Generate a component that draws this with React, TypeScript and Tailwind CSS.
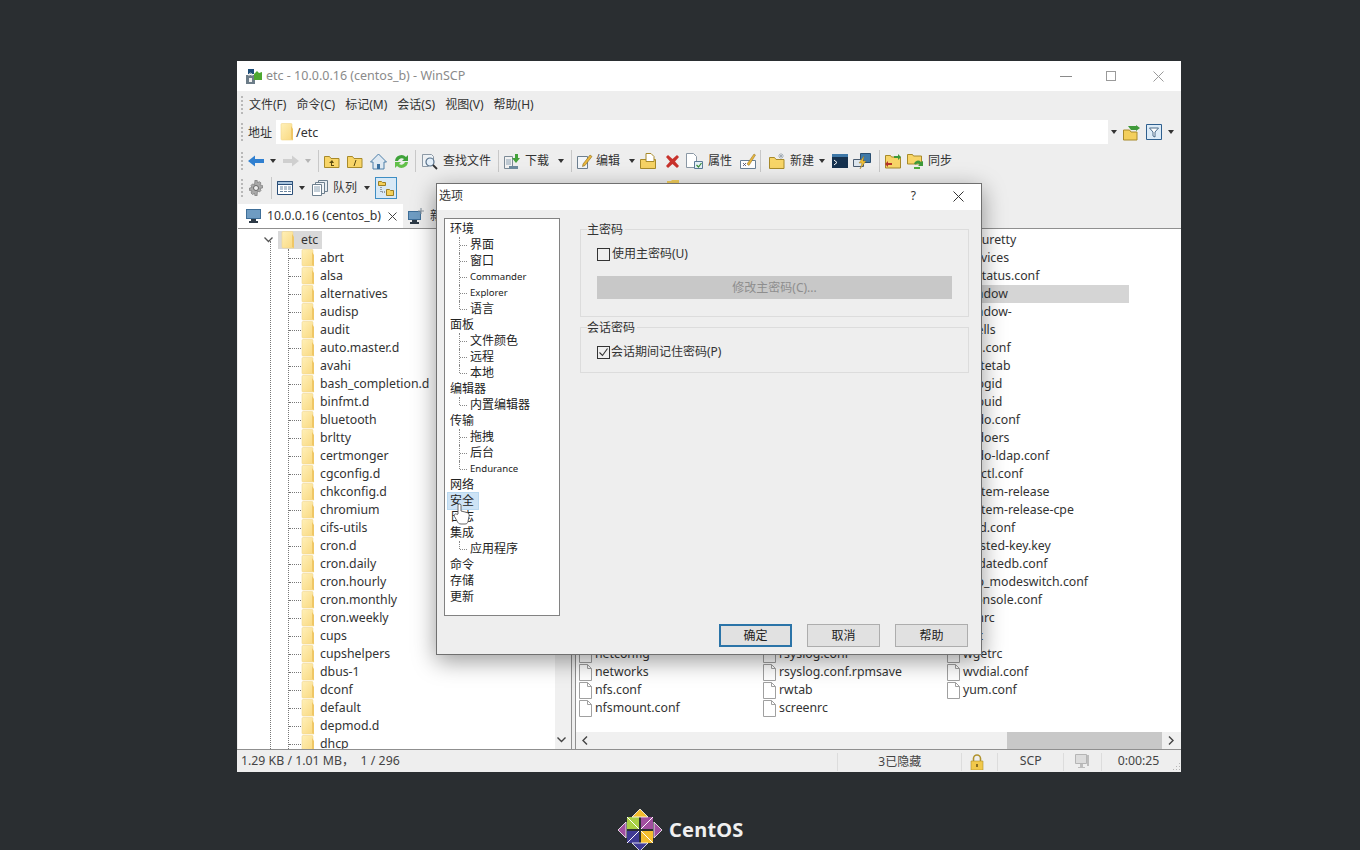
import React from "react";

const SANS = "font-['Noto_Sans','Noto_Sans_CJK_SC',sans-serif]";

const Folder = ({ c = "" }: { c?: string }) => (
  <svg viewBox="0 0 14 18" className={`w-[14px] h-[18px] shrink-0 ${c}`}>
    <defs>
      <linearGradient id="fg" x1="0" y1="0" x2="1" y2="1">
        <stop offset="0" stopColor="#fff0b8" />
        <stop offset="1" stopColor="#f9d87f" />
      </linearGradient>
    </defs>
    <path d="M1 1.5q0-1 1-1h9q1 0 1 1v14l1 1.5H2q-1 0-1-1z" fill="url(#fg)" stroke="#f1d78f" strokeWidth=".6" />
    <path d="M11 3v13l2 1V6z" fill="#efc766" />
  </svg>
);

const FileIcon = () => (
  <svg viewBox="0 0 13 17" className="w-[13px] h-[17px] shrink-0">
    <path d="M.5.5h8l4 4v12H.5z" fill="#fff" stroke="#a0a0a0" />
    <path d="M8.5.5v4h4" fill="none" stroke="#a0a0a0" />
  </svg>
);

const Caret = ({ c = "", muted = false }: { c?: string; muted?: boolean }) => (
  <svg viewBox="0 0 6 4" className={`w-[6px] h-[4px] shrink-0 ${c}`}>
    <path d="M0 0h6L3 4z" fill={muted ? "#b5b5b5" : "#333"} />
  </svg>
);

const Grip = () => <div className="w-[2px] h-[18px] shrink-0 border-l-2 border-dotted border-[#b8b8b8]" />;
const Sep = ({ c = "" }: { c?: string }) => <div className={`w-px h-[22px] shrink-0 bg-[#c8c8c8] ${c}`} />;

const Ico = ({ w = 16, h = 16, c = "", children }: { w?: number; h?: number; c?: string; children: React.ReactNode }) => (
  <svg viewBox={`0 0 ${w} ${h}`} width={w} height={h} className={`shrink-0 ${c}`}>
    {children}
  </svg>
);

const YFolder = () => <path d="M.5 3.5h5l1.5 2h8v9H.5z" fill="#f8d568" stroke="#a88a2a" />;

const titleRow = "h-[30px] bg-white flex items-center shrink-0";
const tool = "text-[12px] leading-none text-[#333]";

const treeItems = [
  "abrt", "alsa", "alternatives", "audisp", "audit", "auto.master.d", "avahi", "bash_completion.d", "binfmt.d",
  "bluetooth", "brltty", "certmonger", "cgconfig.d", "chkconfig.d", "chromium", "cifs-utils", "cron.d", "cron.daily",
  "cron.hourly", "cron.monthly", "cron.weekly", "cups", "cupshelpers", "dbus-1", "dconf", "default", "depmod.d", "dhcp",
];

const col1 = ["netconfig", "networks", "nfs.conf", "nfsmount.conf"];
const col2 = ["rsyslog.conf", "rsyslog.conf.rpmsave", "rwtab", "screenrc"];
const col3 = [
  "securetty", "services", "sestatus.conf", "shadow", "shadow-", "shells", "sos.conf", "statetab", "subgid", "subuid",
  "sudo.conf", "sudoers", "sudo-ldap.conf", "sysctl.conf", "system-release", "system-release-cpe", "tcsd.conf",
  "trusted-key.key", "updatedb.conf", "usb_modeswitch.conf", "vconsole.conf", "vimrc", "virc", "wgetrc", "wvdial.conf", "yum.conf",
];

const FileRow = ({ name, sel = false }: { name: string; sel?: boolean }) => (
  <div className={`h-[18px] flex items-center gap-[3px] ${sel ? "bg-[#d5d5d5]" : ""}`}>
    <FileIcon />
    <span className="text-[12.3px] leading-none text-[#333] whitespace-nowrap">{name}</span>
  </div>
);

const options: [string, number, boolean?][] = [
  ["环境", 0], ["界面", 1], ["窗口", 1], ["Commander", 1, true], ["Explorer", 1, true], ["语言", 2],
  ["面板", 0], ["文件颜色", 1], ["远程", 1], ["本地", 2],
  ["编辑器", 0], ["内置编辑器", 2],
  ["传输", 0], ["拖拽", 1], ["后台", 1], ["Endurance", 2, true],
  ["网络", 0], ["安全", 0], ["日志", 0], ["集成", 0], ["应用程序", 2], ["命令", 0], ["存储", 0], ["更新", 0],
];

const OptionRow = ({ label, kind, small }: { label: string; kind: number; small?: boolean }) => {
  const sel = label === "安全";
  if (kind === 0) {
    return (
      <div className="h-[16px] flex items-center pl-[2px]">
        <span className={`text-[12px] leading-[16px] text-[#222] px-[2px] -mx-[2px] ${sel ? "bg-[#cde3f5] outline outline-1 outline-[#b9d8f0] pr-[4px]" : ""}`}>{label}</span>
      </div>
    );
  }
  return (
    <div className="h-[16px] flex items-center relative pl-[22px]">
      <div className={`absolute left-[11px] top-0 border-l border-dotted border-[#888] ${kind === 2 ? "h-[8px]" : "h-[16px]"}`} />
      <div className="absolute left-[12px] top-[8px] w-[7px] border-t border-dotted border-[#888]" />
      <span className={`${small ? "text-[9.6px] -mt-[1px]" : "text-[12px]"} leading-[16px] text-[#222]`}>{label}</span>
    </div>
  );
};

const DlgBtn = ({ label, primary = false }: { label: string; primary?: boolean }) => (
  <div className={`w-[73px] h-[23px] flex items-center justify-center text-[12px] text-[#222] bg-[#e1e1e1] ${primary ? "border-2 border-[#2b74a8]" : "border border-[#adadad]"}`}>{label}</div>
);

const Group = ({ title, c, children }: { title: string; c: string; children: React.ReactNode }) => (
  <div className={`relative border border-[#dcdcdc] ${c}`}>
    <span className="absolute left-[6px] -top-[8px] bg-[#eeeeee] pr-[2px] text-[12px] leading-[16px] text-[#333]">{title}</span>
    {children}
  </div>
);

export default function App() {
  return (
    <div className={`relative w-[1360px] h-[850px] overflow-hidden bg-[#2a2e31] ${SANS}`}>
      {/* main window */}
      <div className="absolute left-[237px] top-[61px] w-[944px] h-[711px] flex flex-col bg-[#eeeeee]">
        <div className={`${titleRow} pl-[8px] relative`}>
          <Ico w={17} h={17}>
            <path d="M3 1h6v5H3z" fill="#1e4f7a" />
            <path d="M1 7h9v9H1z" fill="#6c7c88" />
            <path d="M4 8v-2a2 2 0 0 1 3 0v2" fill="none" stroke="#ddd" />
            <path d="M9 6l3-3 2 2 3-1v8H9z" fill="#4ea82f" />
            <path d="M4 10h3v4H4z" fill="#eee" />
          </Ico>
          <span className="ml-[4px] text-[12.5px] text-[#8a8a8a] whitespace-nowrap">etc - 10.0.0.16 (centos_b) - WinSCP</span>
          <div className="ml-auto flex items-center mr-[17px] gap-[34px]">
            <div className="w-[12px] h-px bg-[#8a8a8a]" />
            <div className="w-[10px] h-[10px] border border-[#9a9a9a]" />
            <Ico w={11} h={11} c="ml-[3px]"><path d="M.5.5l10 10M10.5.5l-10 10" stroke="#9a9a9a" fill="none" /></Ico>
          </div>
        </div>

        {/* menu */}
        <div className="h-[29px] shrink-0 flex items-center pl-[4px] pb-[1px]">
          <Grip />
          <div className="flex ml-[6px] gap-[10px] text-[12px] text-[#333] whitespace-nowrap">
            <span>文件(F)</span><span>命令(C)</span><span>标记(M)</span><span>会话(S)</span><span>视图(V)</span><span>帮助(H)</span>
          </div>
        </div>

        {/* address */}
        <div className="h-[24px] shrink-0 flex items-center pl-[4px]">
          <Grip />
          <span className="ml-[5px] text-[12px] text-[#333] w-[28px] mt-[2px]">地址</span>
          <div className="w-[843px] h-[24px] bg-white flex items-center pl-[4px]">
            <Folder />
            <span className="ml-[2px] text-[12.5px] text-[#333] mt-[2px]">/etc</span>
            <div className="ml-auto w-[11px] h-full bg-[#eeeeee] flex items-center justify-center"><Caret /></div>
          </div>
          <Ico w={18} h={17} c="ml-[4px]">
            <path d="M.5 6h6l1.500 2h6v8H.5z" fill="#f3cf5c" stroke="#a88a2a" />
            <path d="M5 2h8v-1l4 3-4 3V6H8z" fill="#3f9a3a" />
          </Ico>
          <Ico w={16} h={16} c="ml-[5px]">
            <path d="M.5.5h15v15H.5z" fill="#dcebf7" stroke="#2e5f8e" />
            <path d="M3.500 4h9l-3.500 4v5l-2-1V8z" fill="#fff" stroke="#4a6a88" />
          </Ico>
          <Caret c="ml-[6px]" />
        </div>

        {/* toolbar 1 */}
        <div className="h-[24px] mt-[5px] shrink-0 flex items-center pl-[4px]">
          <Grip />
          <Ico w={16} h={12} c="ml-[5px]"><path d="M0 6l7-5.500v3.500h9v4H7v3.500z" fill="#2f7fd0" /></Ico>
          <Caret c="ml-[6px]" />
          <Ico w={16} h={12} c="ml-[7px]"><path d="M16 6L9 .5V4H0v4h9v3.500z" fill="#cfcfcf" /></Ico>
          <Caret c="ml-[6px]" muted />
          <Sep c="ml-[7px]" />
          <Ico w={16} h={16} c="ml-[5px]"><YFolder /><path d="M8 7l-3 3h2v3h3v-1H8v-2h2z" fill="#5a4a10" /></Ico>
          <Ico w={16} h={16} c="ml-[7px]"><YFolder /><path d="M9 7l-2 6" stroke="#5a4a10" fill="none" /></Ico>
          <Ico w={17} h={17} c="ml-[7px]">
            <path d="M8.500 1L.5 9h2.500v7h11V9h2.500z" fill="#dfe9f2" stroke="#4d7ea8" />
            <path d="M7 11h3v5H7z" fill="#3a70a0" />
          </Ico>
          <Ico w={17} h={17} c="ml-[6px]">
            <path d="M2 8a6.500 6.500 0 0 1 11-4l2-2v6H9l2-2a4 4 0 0 0-6 2z" fill="#3fa33a" />
            <path d="M15 9a6.500 6.500 0 0 1-11 4l-2 2V9h6l-2 2a4 4 0 0 0 6-2z" fill="#63c04a" />
          </Ico>
          <Sep c="ml-[5px]" />
          <Ico w={17} h={17} c="ml-[5px]">
            <path d="M1.500 1.500h9l2 2v5M1.500 1.500v12h6" fill="#eef3f7" stroke="#8d99a5" />
            <circle cx="9" cy="9" r="4" fill="#e5f0fa" stroke="#56708a" strokeWidth="1.200" />
            <path d="M12 12l4 4" stroke="#333" strokeWidth="1.800" />
          </Ico>
          <span className={`ml-[5px] ${tool}`}>查找文件</span>
          <Sep c="ml-[7px]" />
          <Ico w={17} h={17} c="ml-[4px]">
            <path d="M1.500 3.500h8v12h-8z" fill="#f2f2f2" stroke="#7c8a96" />
            <path d="M3 7h5M3 9h5M3 11h5" stroke="#8aa0b2" />
            <path d="M9 5h3V1h3v4h2l-4 5z" fill="#43a13a" />
            <path d="M6 13h9v3H6z" fill="#6d8a9e" />
          </Ico>
          <span className={`ml-[5px] ${tool}`}>下载</span>
          <Caret c="ml-[9px]" />
          <Sep c="ml-[7px]" />
          <Ico w={17} h={17} c="ml-[4px]">
            <path d="M1.500 3.500h10v12h-10z" fill="#f3f6f9" stroke="#6d7f90" />
            <path d="M7 11L14 2l2 1.500L9 12.500l-2.500 1z" fill="#e9b63c" stroke="#8a6d20" strokeWidth=".6" />
          </Ico>
          <span className={`ml-[3px] ${tool}`}>编辑</span>
          <Caret c="ml-[9px]" />
          <Ico w={16} h={16} c="ml-[5px]">
            <path d="M.5 6.500h15v9H.5z" fill="#f6d263" stroke="#a88a2a" />
            <path d="M6 .5h5l3 3v5H6z" fill="#fff" stroke="#a88a2a" />
          </Ico>
          <Ico w={15} h={15} c="ml-[9px]"><path d="M1 3l2-2 4.500 4L12 1l2 2-4 4.500 4 4.500-2 2-4.500-4L3 14l-2-2 4-4.500z" fill="#c8322c" /></Ico>
          <Ico w={17} h={16} c="ml-[6px]">
            <path d="M.5.5h7l3 3v11H.5z" fill="#fff" stroke="#8b98a5" />
            <path d="M8.500 8.500h8v7h-8z" fill="#e6f1f8" stroke="#5c7c98" />
            <path d="M10.500 12l2 2 3-4" stroke="#3b8d3a" fill="none" strokeWidth="1.200" />
          </Ico>
          <span className={`ml-[5px] ${tool}`}>属性</span>
          <Ico w={16} h={16} c="ml-[8px]">
            <path d="M.5 7.500h15v8H.5z" fill="#fff" stroke="#6a8096" />
            <path d="M7 11l7-10 1.500 1-6.500 10.500z" fill="#e9b63c" stroke="#8a6d20" strokeWidth=".5" />
            <path d="M3 10l3 3M6 10l-3 3" stroke="#446" strokeWidth=".8" />
          </Ico>
          <Sep c="ml-[4px]" />
          <Ico w={16} h={16} c="ml-[8px]">
            <path d="M.5 4.500h5l1.500 2h8v9H.5z" fill="#f8d568" stroke="#a88a2a" />
            <path d="M12 0v6M9 3h6M10 1l4 4M14 1l-4 4" stroke="#9aa5ae" strokeWidth=".8" />
          </Ico>
          <span className={`ml-[5px] ${tool}`}>新建</span>
          <Caret c="ml-[5px]" />
          <Ico w={16} h={14} c="ml-[7px]">
            <path d="M0 0h16v14H0z" fill="#16324f" />
            <path d="M0 0h16v3H0z" fill="#3e78a8" />
            <path d="M2 6l3 2.500L2 11" stroke="#fff" fill="none" />
          </Ico>
          <Ico w={18} h={17} c="ml-[5px]">
            <path d="M7.500.5h10v9h-10z" fill="#3f79a8" stroke="#2a4e70" />
            <path d="M.5 6.500h10v7h-10z" fill="#dde6ee" stroke="#4a5c70" />
            <path d="M11 3L6 10h3l-2 6 6-8h-3z" fill="#f0bf35" stroke="#8a6d20" strokeWidth=".4" />
          </Ico>
          <Sep c="ml-[8px]" />
          <Ico w={16} h={16} c="ml-[5px]">
            <path d="M.5 2.500h5l1 1.500h9v11H.5z" fill="#f8d568" stroke="#a88a2a" />
            <path d="M9 3h4V1l3 3-3 3V5H9z" fill="#3f9a3a" />
            <path d="M7 12H3v2l-3-3 3-3v2h4z" fill="#b5352c" />
          </Ico>
          <Ico w={16} h={16} c="ml-[6px]">
            <path d="M.5 1.500h5l1 1.500h8v8H.5z" fill="#f8d568" stroke="#a88a2a" />
            <path d="M7 11a4 4 0 0 1 7-2l2-1v5h-5l1.500-1.500a2 2 0 0 0-3.500 0z" fill="#3f9a3a" />
            <path d="M7 14h6v2H7z" fill="#4fae3e" />
          </Ico>
          <span className={`ml-[5px] ${tool}`}>同步</span>
        </div>

        {/* toolbar 2 */}
        <div className="h-[26px] mt-[2px] shrink-0 flex items-center pl-[4px]">
          <Grip />
          <Ico w={16} h={16} c="ml-[5px]">
            <path d="M7 0h2l.5 2.500 2-.8 1.500 1.200-1 2 2.500.6v2.500l-2.500.5 1 2-1.500 1.500-2-1L9 16H7l-.5-2.500-2 1L3 13l1-2-2.500-.5V8L4 7.400l-1-2 1.500-1.500 2 .8z" fill="#a9a9a9" stroke="#6d6d6d" strokeWidth=".6" />
            <circle cx="8" cy="8" r="2.500" fill="#eee" stroke="#666" />
          </Ico>
          <Sep c="ml-[7px]" />
          <Ico w={16} h={14} c="ml-[5px]">
            <path d="M.5.5h15v13H.5z" fill="#fff" stroke="#2b4f78" />
            <path d="M.5.5h15v3H.5z" fill="#a9c4dd" stroke="#2b4f78" />
            <path d="M3 6h3M7 6h3M11 6h3M3 8h3M7 8h3M11 8h3M3 10.500h3M7 10.500h3M11 10.500h3" stroke="#6d87a0" />
          </Ico>
          <Caret c="ml-[6px]" />
          <Ico w={16} h={16} c="ml-[7px]">
            <path d="M6.500 .5h9v11h-9z" fill="#e9eef2" stroke="#6d7f8e" />
            <path d="M3.500 2.500h9v11h-9z" fill="#f2f5f7" stroke="#6d7f8e" />
            <path d="M.5 4.500h9v11h-9z" fill="#fff" stroke="#6d7f8e" />
            <path d="M2 7h6M2 9h6M2 11h6" stroke="#8aa0b2" />
          </Ico>
          <span className={`ml-[5px] ${tool}`}>队列</span>
          <Caret c="ml-[7px]" />
          <div className="ml-[5px] w-[22px] h-[22px] bg-[#d8e9f6] border border-[#3e8ec4] flex items-center justify-center">
            <Ico w={16} h={15}>
              <path d="M.5.5h3l1 1h3v3h-7z" fill="#f3d05b" stroke="#9c7f23" />
              <path d="M8.500 8.500h3l1 1h3v5h-7z" fill="#f3d05b" stroke="#9c7f23" />
              <path d="M3 6v5h5" stroke="#555" strokeDasharray="1 1" fill="none" />
            </Ico>
          </div>
        </div>

        {/* tabs */}
        <div className="h-[24px] mt-[3px] shrink-0 flex items-stretch pl-px">
          <div className="w-[165px] bg-white flex items-center pl-[8px] relative">
            <Ico w={15} h={14}>
              <path d="M0 0h15v10H0z" fill="#3e6e98" />
              <path d="M1 1h13v8H1z" fill="#6f9cc2" />
              <path d="M5 10h5v2H5zM3 12h9v2H3z" fill="#2d3a46" />
            </Ico>
            <span className="ml-[6px] text-[12.3px] text-[#333] whitespace-nowrap">10.0.0.16 (centos_b)</span>
            <Ico w={9} h={9} c="ml-[7px]"><path d="M.5.5l8 8M8.500.5l-8 8" stroke="#444" fill="none" /></Ico>
          </div>
          <div className="flex items-center pl-[5px]">
            <Ico w={17} h={16}>
              <path d="M0 3h13v9H0z" fill="#3e6e98" />
              <path d="M1 4h11v7H1z" fill="#6f9cc2" />
              <path d="M4 12h5v2H4zM2 14h9v2H2z" fill="#2d3a46" />
              <path d="M13 0v6M10 3h6" stroke="#8c98a2" strokeWidth="1.200" />
            </Ico>
            <span className="ml-[5px] text-[12.3px] text-[#333]">新</span>
          </div>
        </div>

        {/* panels */}
        <div className="flex-1 min-h-0 flex gap-[3px] bg-[#eeeeee]">
          {/* tree */}
          <div className="w-[334px] ml-px border-t border-r border-[#8f8f8f] bg-white flex overflow-hidden">
            <div className="flex-1 relative overflow-hidden pt-[2px]">
              <div className="absolute left-[32px] top-[12px] bottom-0 border-l border-dotted border-[#777]" />
              <div className="absolute left-[50px] top-[20px] bottom-0 border-l border-dotted border-[#777]" />
              <div className="h-[18px] flex items-center">
                <Ico w={9} h={6} c="ml-[26px]"><path d="M.5.500l4 4 4-4" stroke="#555" strokeWidth="1.300" fill="none" /></Ico>
                <div className="ml-[5px] h-[18px] w-[44px] bg-[#d9d9d9] flex items-center pl-[3px]">
                  <Folder />
                  <span className="ml-[6px] text-[12.3px] text-[#333]">etc</span>
                </div>
              </div>
              {treeItems.map((t) => (
                <div key={t} className="h-[18px] flex items-center relative pl-[63px]">
                  <div className="absolute left-[51px] top-[9px] w-[12px] border-t border-dotted border-[#777]" />
                  <Folder />
                  <span className="ml-[5px] text-[12.3px] leading-none text-[#333] whitespace-nowrap">{t}</span>
                </div>
              ))}
            </div>
            <div className="w-[16px] bg-[#f0f0f0] flex flex-col justify-end items-center pb-[6px] pr-[3px] shrink-0">
              <Ico w={9} h={6}><path d="M.5.500l4 4 4-4" stroke="#444" strokeWidth="1.400" fill="none" /></Ico>
            </div>
          </div>

          {/* file list */}
          <div className="flex-1 min-w-0 border-t border-l border-[#8f8f8f] bg-white flex flex-col overflow-hidden">
            <div className="flex-1 min-h-0 grid grid-cols-[184px_184px_182px] pl-[3px] pt-[2px] content-start">
              <div className="h-[486px] flex flex-col justify-end">{col1.map((n) => <FileRow key={n} name={n} />)}</div>
              <div className="h-[486px] flex flex-col justify-end">{col2.map((n) => <FileRow key={n} name={n} />)}</div>
              <div className="flex flex-col">{col3.map((n) => <FileRow key={n} name={n} sel={n === "shadow"} />)}</div>
            </div>
            <div className="h-[17px] shrink-0 bg-[#f0f0f0] flex items-center relative">
              <Ico w={6} h={9} c="ml-[6px]"><path d="M5 .5l-4 4 4 4" stroke="#444" strokeWidth="1.400" fill="none" /></Ico>
              <div className="ml-auto w-[155px] h-full bg-[#c8c8c8]" />
              <Ico w={6} h={9} c="ml-[6px] mr-[7px]"><path d="M1 .5l4 4-4 4" stroke="#444" strokeWidth="1.400" fill="none" /></Ico>
            </div>
          </div>
        </div>

        {/* status */}
        <div className="h-[23px] shrink-0 border-t border-[#8f8f8f] flex items-center text-[12.3px] text-[#444] whitespace-pre pt-[1px]">
          <span className="pl-[4px] w-[601px]">1.29 KB / 1.01 MB，  1 / 296</span>
          <div className="w-px h-[18px] bg-[#dcdcdc]" />
          <div className="w-[123px] text-center text-[12px]">3已隐藏</div>
          <div className="w-px h-[18px] bg-[#dcdcdc]" />
          <div className="w-[35px] flex justify-center pr-[5px]">
            <Ico w={14} h={16}>
              <path d="M3.500 7V4.500a3.500 3.500 0 0 1 7 0V7" fill="none" stroke="#b0922c" strokeWidth="1.600" />
              <path d="M1 7h12v9H1z" fill="#f1c84a" stroke="#b0922c" strokeWidth=".6" />
              <path d="M6 10h2v3H6z" fill="#8a6d20" />
            </Ico>
          </div>
          <div className="w-px h-[18px] bg-[#dcdcdc]" />
          <div className="w-[65px] text-center">SCP</div>
          <div className="w-px h-[18px] bg-[#dcdcdc]" />
          <div className="w-[37px] flex justify-center">
            <Ico w={15} h={16}>
              <path d="M.5.5h11v9h-11z" fill="#dcdcdc" stroke="#b5b5b5" />
              <path d="M12 1h2v11h-2zM5 10h3v3H5zM3 13h7v1H3z" fill="#bdbdbd" />
            </Ico>
          </div>
          <div className="w-px h-[18px] bg-[#dcdcdc]" />
          <div className="w-[66px] text-center pl-[7px]">0:00:25</div>
          <Ico w={9} h={9} c="ml-[4px] mt-[10px]">
            <path d="M7 1h1v1H7zM4 4h1v1H4zM7 4h1v1H7zM1 7h1v1H1zM4 7h1v1H4zM7 7h1v1H7z" fill="#b5b5b5" />
          </Ico>
        </div>
      </div>

      {/* peek of hidden toolbar icon above the dialog */}
      <Ico w={14} h={4} c="absolute left-[666px] top-[179px]">
        <path d="M1 4V2h4l1-1h7v3z" fill="#f3cf5c" />
      </Ico>

      {/* options dialog */}
      <div className="absolute left-[436px] top-[183px] w-[546px] h-[472px] flex flex-col bg-[#eeeeee] border border-[#707070] shadow-[0_6px_22px_rgba(0,0,0,0.4)]">
        <div className="h-[26px] shrink-0 bg-white flex items-center pl-[2px] pb-[2px]">
          <span className="text-[12px] text-[#333]">选项</span>
          <span className="ml-auto text-[12px] text-[#333] mr-[37px]">?</span>
          <Ico w={11} h={11} c="mr-[17px]"><path d="M.5.5l10 10M10.500.5l-10 10" stroke="#333" fill="none" /></Ico>
        </div>
        <div className="flex-1 min-h-0 flex pl-[7px] pt-[8px]">
          <div className="w-[116px] h-[398px] shrink-0 bg-white border border-[#828282] pt-[2px] pl-[3px] relative">
            {options.map(([l, k, s]) => <OptionRow key={l} label={l} kind={k} small={s} />)}
            <Ico w={18} h={22} c="absolute left-[8px] top-[284px]">
              <path d="M5 11V2.500a1.500 1.500 0 0 1 3 0V8l6 1.500c2 .5 2.500 2 2 4l-1 5c-.5 1.500-1 2.500-3 2.500H8c-2 0-3-1-4-3L1.500 13.500c-1-2 1-3.500 2.500-2z" fill="#fff" stroke="#555" strokeWidth=".9" />
            </Ico>
          </div>
          <div className="ml-[20px] w-[389px] flex flex-col">
            <Group title="主密码" c="mt-[11px] h-[88px] px-[16px] pt-[15px]">
              <div className="flex items-center">
                <div className="w-[13px] h-[13px] border border-[#333] bg-[#eeeeee]" />
                <span className="ml-[2px] text-[12px] text-[#333]">使用主密码(U)</span>
              </div>
              <div className="mt-[13px] h-[23px] w-[355px] bg-[#c8c8c8] flex items-center justify-center text-[12px] text-[#8e8e8e]">修改主密码(C)...</div>
            </Group>
            <Group title="会话密码" c="mt-[10px] h-[46px] px-[16px] pt-[15px]">
              <div className="flex items-center">
                <div className="w-[13px] h-[13px] border border-[#333] bg-[#eeeeee] flex items-center justify-center">
                  <Ico w={11} h={11}><path d="M1.500 5.500l3 3 5-7" stroke="#333" fill="none" strokeWidth="1.100" /></Ico>
                </div>
                <span className="ml-[1px] text-[12px] text-[#333]">会话期间记住密码(P)</span>
              </div>
            </Group>
          </div>
        </div>
        <div className="absolute right-[13px] bottom-[7px] flex gap-[15px]">
          <DlgBtn label="确定" primary />
          <DlgBtn label="取消" />
          <DlgBtn label="帮助" />
        </div>
      </div>

      {/* CentOS logo */}
      <div className="absolute left-[618px] top-[809px] flex items-center">
        <Ico w={44} h={42}>
          <path d="M22 0l8 8h-16z" fill="#f4bd2f" />
          <path d="M44 21l-8-8v16z" fill="#a14f9f" />
          <path d="M22 42l8-8h-16z" fill="#3f3a94" />
          <path d="M0 21l8-8v16z" fill="#a14f9f" />
          <path d="M9 8h12v12H9z" fill="#a9cf45" />
          <path d="M23 8h12v12H23z" fill="#a14f9f" />
          <path d="M9 22h12v12H9z" fill="#3f3a94" />
          <path d="M23 22h12v12H23z" fill="#f4bd2f" />
          <path d="M9 8l12 12M35 8L23 20M9 34l12-12M35 34L23 22" stroke="#fff" strokeWidth="1" />
          <path d="M22 0l8 8h-16zM44 21l-8-8v16zM22 42l8-8h-16zM0 21l8-8v16z" fill="none" stroke="#fff" strokeWidth=".8" />
        </Ico>
        <span className="ml-[7px] text-[20px] font-bold text-[#f0f0f0] tracking-[0.2px]">CentOS</span>
      </div>
    </div>
  );
}
